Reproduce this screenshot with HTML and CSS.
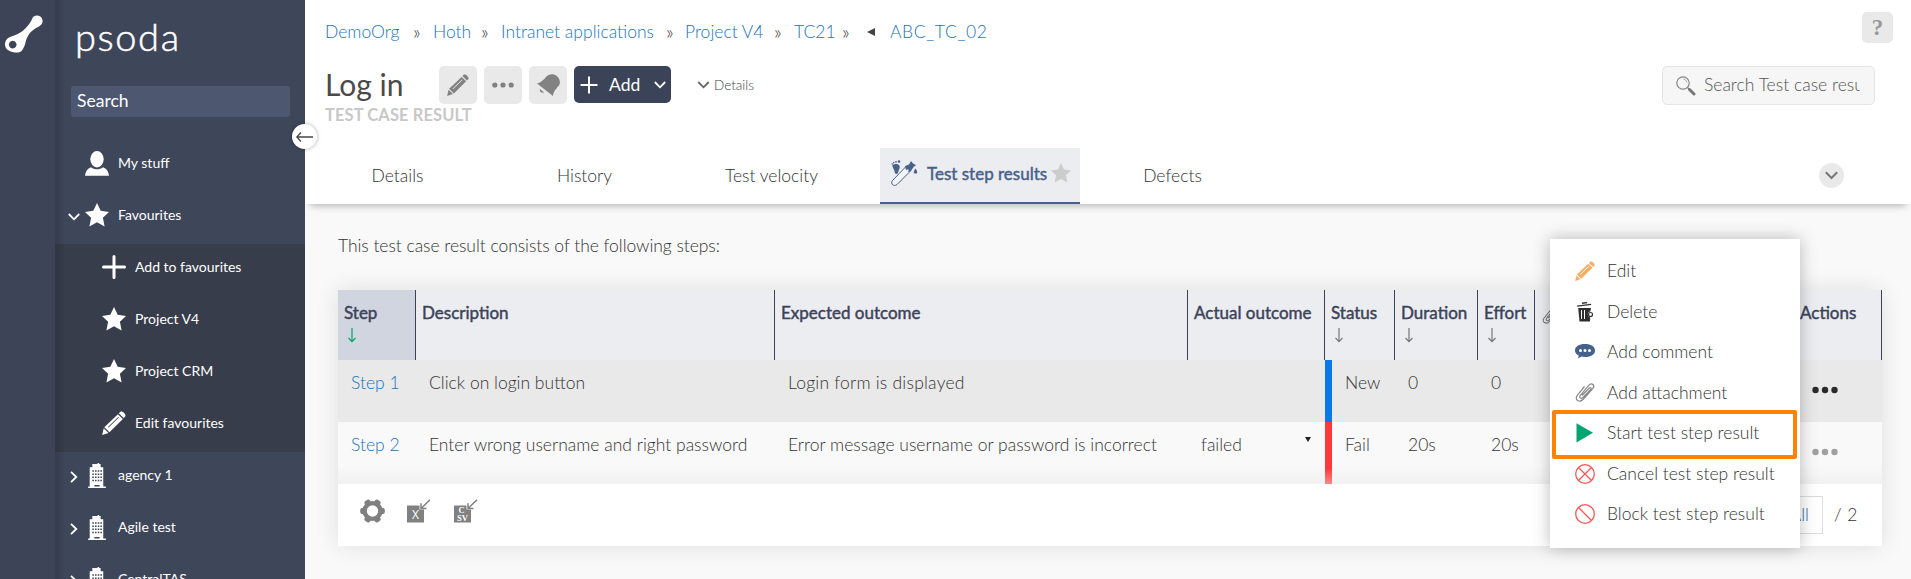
FILE: index.html
```html
<!DOCTYPE html>
<html lang="en">
<head>
<meta charset="utf-8">
<title>Log in - Test case result</title>
<link rel="stylesheet" href="styles.css">
</head>
<body>
<svg class="defs" width="0" height="0">
  <symbol id="star" viewBox="0 0 24 24"><path d="M12 0l3.700 7.800 8.300 1.100-6.100 5.800 1.700 8.800L12 19.200l-7.600 4.300 1.700-8.800L0 8.900l8.300-1.100z"/></symbol>
  <symbol id="pencil" viewBox="0 0 24 24"><path d="M16.800 2.300l1.400-1.400c1.800-1.800 6.600 2.800 5 4.600l-1.500 1.600z"/><path fill-rule="evenodd" d="M15.900 3.200l5 4.800L7.500 21.200 2.300 16.200zM16.300 6L6 16l.6.600L16.900 6.600z"/><path d="M1.700 17.300l4.800 4.600L.2 24z"/></symbol>
  <symbol id="person" viewBox="0 0 24 25"><ellipse cx="12" cy="8.300" rx="6.700" ry="8.200"/><path d="M0 24.700c.5-4.400 2.500-6.900 6-8.400 3.500 2.700 8.500 2.700 12 0 3.500 1.500 5.500 4 6 8.400z"/></symbol>
  <symbol id="building" viewBox="0 0 17 24"><path fill-rule="evenodd" d="M4 1h5V0h1.500v1H12v3h2.500v18.500H17V24H0v-1.500h1.500V4H4zM4 7v1.500h1.500V7zm2.600 0v1.500h1.500V7zm2.600 0v1.500h1.500V7zm2.500 0v1.500h1.500V7zM4 10v1.500h1.500V10zm2.600 0v1.500h1.500V10zm2.600 0v1.500h1.500V10zm2.500 0v1.500h1.500V10zM4 13v1.500h1.500V13zm2.600 0v1.500h1.500V13zm2.600 0v1.500h1.500V13zm2.500 0v1.500h1.500V13zM4 16v1.500h1.500V16zm2.600 0v1.500h1.500V16zm2.600 0v1.500h1.500V16zm2.500 0v1.500h1.500V16zM6 21v1.500h5V21z"/></symbol>
  <symbol id="chev" viewBox="0 0 12 8"><path d="M.8 1L6 6.300 11.200 1" fill="none" stroke="currentColor" stroke-width="1.800"/></symbol>
  <symbol id="arrow" viewBox="0 0 8 15"><path d="M4 0v13.500M.5 10L4 13.700 7.500 10" fill="none" stroke="currentColor" stroke-width="1.200"/></symbol>
  <symbol id="clip" viewBox="0 0 20 19"><path d="M7 12.500L14.300 5c1.200-1 2.400.2 1.400 1.300L8 14.500c-2 2-4.300.2-2.800-2L13.500 2.600c2.800-3.300 7-.8 4.600 2.600L8.500 16c-4 4.200-9.500.8-6.200-3.700L9.500 3.500" fill="none" stroke="currentColor" stroke-width="1.200"/></symbol>
  <symbol id="export" viewBox="0 0 24 24"><path d="M0 6.500h12.500V10.500H17v13H0z"/><path d="M23 .7L14.500 9M14 4.200v5.300h5.500" fill="none" stroke="currentColor" stroke-width="1.500"/></symbol>
</svg>
<div class="app">
  <div class="rail"><svg width="38" height="38" viewBox="0 0 38 38"><path fill-rule="evenodd" d="M27.500 3c1-3.500 9-4 10 2 .6 4-2.500 6-5.500 7.500-6 3-10 8-11.500 15-1.500 6-4 10-7.500 10C3 37.500-1 33 .2 27.500c1-4.500 5.300-5.800 9-7 8-2.700 15-9.500 18.300-17.500zM7.700 25.800a3.800 3.800 0 1 0 .01 0z"/></svg></div>
  <aside class="side">
    <div class="logo">psoda</div>
    <div class="sidesearch">Search</div>
    <nav class="nav">
      <a class="item"><span class="tw"></span><svg width="24" height="25"><use href="#person"/></svg>My stuff</a>
      <a class="item"><svg class="tw" width="12" height="8"><use href="#chev"/></svg><svg width="24" height="24"><use href="#star"/></svg>Favourites</a>
      <div class="sub">
        <a class="item"><svg width="24" height="24" viewBox="0 0 24 24"><path d="M12 1.500v21M1.500 12h21" stroke="currentColor" stroke-width="3" stroke-linecap="round"/></svg>Add to favourites</a>
        <a class="item"><svg width="24" height="24"><use href="#star"/></svg>Project V4</a>
        <a class="item"><svg width="24" height="24"><use href="#star"/></svg>Project CRM</a>
        <a class="item"><svg width="24" height="24"><use href="#pencil"/></svg>Edit favourites</a>
      </div>
      <a class="item"><svg class="tw right" width="12" height="8"><use href="#chev"/></svg><svg width="24" height="25"><use href="#building"/></svg>agency 1</a>
      <a class="item"><svg class="tw right" width="12" height="8"><use href="#chev"/></svg><svg width="24" height="25"><use href="#building"/></svg>Agile test</a>
      <a class="item"><svg class="tw right" width="12" height="8"><use href="#chev"/></svg><svg width="24" height="25"><use href="#building"/></svg>CentralTAS</a>
    </nav>
    <div class="collapse"><svg width="17" height="10" viewBox="0 0 17 10"><path d="M17 5H1M5 .5L.8 5 5 9.500" fill="none" stroke="#444" stroke-width="1.300"/></svg></div>
  </aside>
  <main class="main">
    <header class="head">
      <div class="crumbrow">
        <div class="crumbs"><a>DemoOrg</a><i>»</i><a>Hoth</a><i>»</i><a>Intranet applications</a><i>»</i><a>Project V4</a><i>»</i><a>TC21</a><i>»</i><svg width="8" height="8"><path d="M0 4l8-4v8z" fill="#444"/></svg><a class="last">ABC_TC_02</a></div>
        <div class="help">?</div>
      </div>
      <div class="titlerow">
        <h1>Log in</h1>
        <div class="btn"><svg width="22" height="22"><use href="#pencil"/></svg></div>
        <div class="btn"><svg width="22" height="6"><circle cx="2.800" cy="3" r="2.600"/><circle cx="11" cy="3" r="2.600"/><circle cx="19.200" cy="3" r="2.600"/></svg></div>
        <div class="btn"><svg width="23" height="22" viewBox="0 0 23 22"><path d="M0 9.500C4 8.500 7 5.500 9 3c3-3.500 8-3.500 11-.8C23 5 24 9 21.500 12c-2.500 3-5 5-5.500 10zM3 15l4 3.500c-2 1-5-1-4-3.500z"/></svg></div>
        <div class="add"><svg width="18" height="18" viewBox="0 0 18 18"><path d="M9 .5v17M.5 9h17" stroke="#fff" stroke-width="2"/></svg><span>Add</span><svg width="12" height="8"><use href="#chev"/></svg></div>
        <div class="more"><svg width="13" height="8"><use href="#chev"/></svg>Details</div>
        <div class="find"><svg width="20" height="20" viewBox="0 0 20 20"><circle cx="7" cy="7" r="6.200" fill="none" stroke="#888" stroke-width="1.200"/><path d="M7.500 3q3 .5 3.500 3.500" fill="none" stroke="#aaa"/><path d="M11.500 11.500l2 2" stroke="#888" stroke-width="1.500"/><path d="M13.500 13.500l4.500 4.500" stroke="#777" stroke-width="3" stroke-linecap="round"/></svg><span>Search Test case results</span></div>
      </div>
      <div class="kind">TEST CASE RESULT</div>
      <div class="tabs">
        <a>Details</a><a>History</a><a class="vel">Test velocity</a>
        <a class="on"><svg width="27" height="27" viewBox="0 0 27 27"><path d="M1.500 5c2-1.500 6-1.500 7 .8.800 2-.5 3.700-1 5.200-.3 1.800-1 3-2.200 3-1.500 0-1.500-2-2-3.500C2.500 8.500 1.200 7 1.500 5z"/><circle cx="1.200" cy="4" r=".8"/><circle cx="2.800" cy="2.600" r=".8"/><circle cx="5" cy="1.800" r=".9"/><circle cx="8" cy="1.500" r="1.300"/><path d="M15 6.500L1.500 20.500c-2.500 3.500 1.500 6.500 4.500 4L19.500 11z" fill="#f4f5f8" stroke="#46618a" stroke-width="1"/><path d="M14 6l4-1.500 2-3.500 2 2.500 3 1.500-2.500 2L20 11l-3 1 1-3-3 1z"/><path d="M24.500 8.500c2 3 2.500 5 0 5s-2-2 0-5z"/></svg><span>Test step results</span><svg class="fav" width="20" height="20"><use href="#star"/></svg></a>
        <a>Defects</a>
        <div class="round"><svg width="13" height="9"><use href="#chev"/></svg></div>
      </div>
    </header>
    <section class="body">
      <p>This test case result consists of the following steps:</p>
      <div class="grid">
        <div class="tr th">
          <div class="sorted">Step<svg width="8" height="15"><use href="#arrow"/></svg></div>
          <div>Description</div><div>Expected outcome</div><div>Actual outcome</div>
          <div>Status<svg width="8" height="15"><use href="#arrow"/></svg></div>
          <div>Duration<svg width="8" height="15"><use href="#arrow"/></svg></div>
          <div>Effort<svg width="8" height="15"><use href="#arrow"/></svg></div>
          <div class="att"><svg width="18" height="17"><use href="#clip"/></svg></div>
          <div class="act">Actions</div>
        </div>
        <div class="tr odd">
          <div><a>Step 1</a></div><div>Click on login button</div><div class="wide">Login form is displayed</div><div></div>
          <div class="st new">New</div><div>0</div><div>0</div><div></div>
          <div class="dots"><svg width="26" height="8"><circle cx="3.500" cy="4" r="3.200"/><circle cx="13" cy="4" r="3.200"/><circle cx="22.500" cy="4" r="3.200"/></svg></div>
        </div>
        <div class="tr even">
          <div><a>Step 2</a></div><div>Enter wrong username and right password</div><div>Error message username or password is incorrect</div><div class="actual">failed<svg width="6" height="5"><path d="M0 0h6L3 5z" fill="#222"/></svg></div>
          <div class="st fail">Fail</div><div>20s</div><div>20s</div><div></div>
          <div class="dots dim"><svg width="26" height="8"><circle cx="3.500" cy="4" r="3.200"/><circle cx="13" cy="4" r="3.200"/><circle cx="22.500" cy="4" r="3.200"/></svg></div>
        </div>
        <div class="foot">
          <svg width="25" height="24" viewBox="-12.500 -12 25 24"><circle r="7.900" fill="none" stroke="currentColor" stroke-width="4.400"/><g id="teeth"><rect x="-12.300" y="-3.100" width="24.600" height="6.200" rx="2" mask="url(#hole)"/><rect x="-12.300" y="-3.100" width="24.600" height="6.200" rx="2" transform="rotate(60)"/><rect x="-12.300" y="-3.100" width="24.600" height="6.200" rx="2" transform="rotate(120)"/></g><circle r="5.700" fill="#fff"/></svg>
          <svg width="24" height="24" viewBox="0 0 24 24"><use href="#export"/><text x="8.400" y="19.500" text-anchor="middle" class="xt">X</text></svg>
          <svg width="24" height="24" viewBox="0 0 24 24"><use href="#export"/><text x="7.500" y="14.200" text-anchor="middle" class="ct">C</text><text x="8.500" y="21.500" text-anchor="middle" class="ct">SV</text></svg>
          <div class="page">All</div><span class="of">/ 2</span>
        </div>
      </div>
    </section>
  </main>
  <div class="menu">
    <a><svg class="or" width="20" height="20"><use href="#pencil"/></svg>Edit</a>
    <a><svg class="bk" width="18" height="20" viewBox="0 0 18 20"><path d="M1 3.500l14-1.800.2 1.300L1.200 4.800zM6 2V.6l5-.6.300 1.300M2.200 6H15l-.7 3.500c-3 .5-3.500 5 0 6l-.4 4H3.500z"/><path d="M5.500 8v9M8.500 8v9" stroke="#fff"/><circle cx="14.500" cy="12.500" r="2" fill="none" stroke="#333" stroke-width="1.200"/></svg>Delete</a>
    <a><svg class="bl" width="20" height="16" viewBox="0 0 20 16"><path d="M10 0c6 0 10 2.500 10 6.500S16 13 10 13c-1.500 0-2.600-.1-3.500-.4L3 14.500l.8-3C1.500 10.500 0 9 0 6.500 0 2.500 4 0 10 0z"/><circle cx="5.500" cy="6.500" r="1.500" fill="#fff"/><circle cx="10" cy="6.500" r="1.500" fill="#fff"/><circle cx="14.500" cy="6.500" r="1.500" fill="#fff"/></svg>Add comment</a>
    <a><svg class="gy" width="20" height="19"><use href="#clip"/></svg>Add attachment</a>
    <a><svg class="gn" width="20" height="20"><path d="M1.500.2L18 9.800 1.500 19.500z"/></svg>Start test step result</a>
    <a><svg width="20" height="20"><circle cx="10" cy="10" r="9.300" class="rd"/><path d="M3.500 3.500l13 13M16.500 3.500l-13 13" class="rd"/></svg>Cancel test step result</a>
    <a><svg width="20" height="20"><circle cx="10" cy="10" r="9.300" class="rd"/><path d="M3.500 3.500l13 13" class="rd"/></svg>Block test step result</a>
    <div class="mark"></div>
  </div>
</div>
</body>
</html>
```
FILE: styles.css
```css
*{box-sizing:border-box}
body{margin:0;font:300 17.5px/24px Lato,"Open Sans",sans-serif;color:#333;background:#f9f9f9;overflow:hidden}
svg{fill:currentColor;flex:none;display:block}
.defs{position:absolute}
.app{display:flex;width:1911px;height:579px;position:relative;overflow:hidden}
.rail{width:55px;background:#3d4457;color:#fff;padding:15px 0 0 5px}
.side{width:250px;background:linear-gradient(90deg,#343b4b,#3e465a 10px);color:#fff;position:relative}
.logo{font-size:38px;line-height:44px;padding:14px 0 0 20px;height:86px;letter-spacing:1.6px;-webkit-text-stroke:.5px #fff}
.sidesearch{margin-left:16px;width:219px;height:31px;border-radius:3px;background:#4d5870;padding:3px 6px;font-weight:400;font-size:17.5px}
.nav{margin-top:23px;font-size:14px;font-weight:400}
.item{display:flex;align-items:center;height:52px;padding:0 0 6px 13px}
.tw{width:12px;margin-right:5px;margin-top:3px}
.right{transform:rotate(-90deg)}
.item svg:not(.tw){margin-right:9px}
.sub{background:linear-gradient(90deg,#2f3541,#373d4a 10px)}
.sub .item{padding-left:47px}
.collapse{position:absolute;left:237px;top:124px;width:25px;height:25px;border-radius:50%;background:#fff;box-shadow:0 0 4px #0005;display:grid;place-items:center;z-index:2}
.main{width:1606px}
.head{height:204px;background:#fff;box-shadow:0 6px 8px -5px #0005}
.crumbrow{display:flex;justify-content:space-between;padding:12px 18px 0 20px;height:66px}
.crumbs{display:grid;grid-template-columns:88px 20px 48px 20px 165px 19px 89px 20px 48px 25px 23px 110px;padding-top:8px;height:32px}
.crumbs a,.tr a{color:#1c74b8}
.crumbs .last{letter-spacing:.65px}
.crumbs i{font-style:normal;font-size:19px;line-height:23px}
.crumbs svg{margin-top:8px}
.help{width:31px;height:31px;border-radius:5px;background:#e9e9e9;color:#999;font:bold 23px/31px "Liberation Serif",serif;text-align:center}
.titlerow{display:flex;height:38px;padding-left:20px}
h1{margin:0;font-weight:400;font-size:30px;line-height:36px;width:114px;color:#4a4a4a}
.btn{width:38px;height:38px;margin-right:7px;border-radius:5px;background:#e9e9e9;color:#828282;display:grid;place-items:center}
.add{width:97px;height:37px;border-radius:5px;background:#3b4358;color:#fff;display:flex;align-items:center;padding-left:6px;font-weight:400}
.add span{width:45px;margin-left:11px}
.more{display:flex;align-items:center;gap:4px;margin-left:26px;width:100px;font-size:13.5px;color:#444}
.more svg{color:#666}
.find{margin-left:865px;width:213px;height:39px;border:1px solid #e5e5e5;border-radius:5px;background:#f6f6f6;display:flex;align-items:center;padding:0 14px 2px 13px;color:#555}
.find svg{margin:3px 8px 0 0}
.find span{overflow:hidden;white-space:nowrap}
.kind{padding:0 0 0 20px;line-height:22px;height:44px;color:#c8c8c8;font-weight:700;font-size:16.5px;letter-spacing:.1px}
.tabs{display:grid;grid-template-columns:185px 189px 201px 200px 185px 1fr;height:56px}
.tabs a{text-align:center;padding-top:16px}
.tabs .vel{padding-right:16px}
.tabs .on{background:#ecedf1;border-bottom:2px solid #46618a;color:#46618a;display:flex;padding:12px 0 0 11px;font-weight:400;font-size:17px;-webkit-text-stroke:.45px #46618a}
.on svg{-webkit-text-stroke:0}
.on span{margin-left:9px;padding-top:2px;width:120px;white-space:nowrap}
.fav{color:#ccc;margin:3px 0 0 4px}
.round{width:25px;height:25px;border-radius:50%;background:#e9e9e9;display:grid;place-items:center;justify-self:end;margin:15px 67px 0 0;color:#777}
.body{padding:30px 0 0 33px}
p{margin:0;height:56px;letter-spacing:-.05px}
.grid{width:1544px;box-shadow:0 0 22px #0000001c;background:#f9f9f9;height:256px}
.tr{display:grid;grid-template-columns:78px 359px 413px 137px 70px 83px 57px 239px 108px;height:62px}
.tr>div{padding:11px 0 0 13px;white-space:nowrap}
.tr.odd{background:#e9e9e9}
.tr.even{background:linear-gradient(#f9f9f9 70%,#f1f1f1)}
.tr>.wide{letter-spacing:.22px}
.tr.th{height:70px;background:#ecedf1;color:#3b4358}
.th>div{border-right:1px solid #3b4358;padding:11px 0 0 6px;font-weight:400;font-size:17px;-webkit-text-stroke:.45px #3b4358}
.th>div svg{margin:3px 0 0 4px;color:#777}
.th .sorted{background:#d1d5e0}
.th .sorted svg{color:#00a470}
.th .att svg{margin:6px 0 0 1px}
.th>.act{padding-left:26px}
.tr>.st{border-left:7px solid #0a78e6}
.tr>.st.fail{border-left:0;padding-left:20px;background:linear-gradient(#ff3939 75%,#f88) left/7px 100% no-repeat}
.actual{display:flex;justify-content:space-between}
.actual svg{margin:4px 14px 0 0}
.tr>.dots{padding:26px 0 0 38px;color:#2a2a2a}
.tr>.dim{color:#a0a0a0}
.foot{height:62px;background:#fff;display:flex;padding:15px 0 0 22px;color:#808080}
.foot svg{margin-right:22px}
.foot svg+svg{margin-right:23px}
.xt{font:400 12px "Open Sans",sans-serif;fill:#fff}
.ct{font:700 8.500px "Liberation Serif",serif;fill:#fff}
.page{margin:-3px 11px 0 auto;border:1px solid #ddd;width:60px;height:38px;padding:6px 13px;text-align:right;color:#236db0}
.of{width:48px;padding-top:4px;color:#333;letter-spacing:.5px}
.menu{position:absolute;left:1550px;top:239px;width:250px;height:309px;background:#fff;box-shadow:0 0 16px #0004;padding:12px 0 0 25px}
.menu a{display:flex;align-items:center;height:40.500px;gap:12px;white-space:nowrap}
.menu svg{width:20px}
.or{color:#f9ad62}.bk{color:#2e2e2e}.bl{color:#46618a}.gy{color:#888}.gn{color:#00a470}
.rd{fill:none;stroke:#f25858;stroke-width:1.300}
.mark{position:absolute;left:2px;top:171px;width:245px;height:49px;border:4px solid #ff8205;border-radius:2px}
```
